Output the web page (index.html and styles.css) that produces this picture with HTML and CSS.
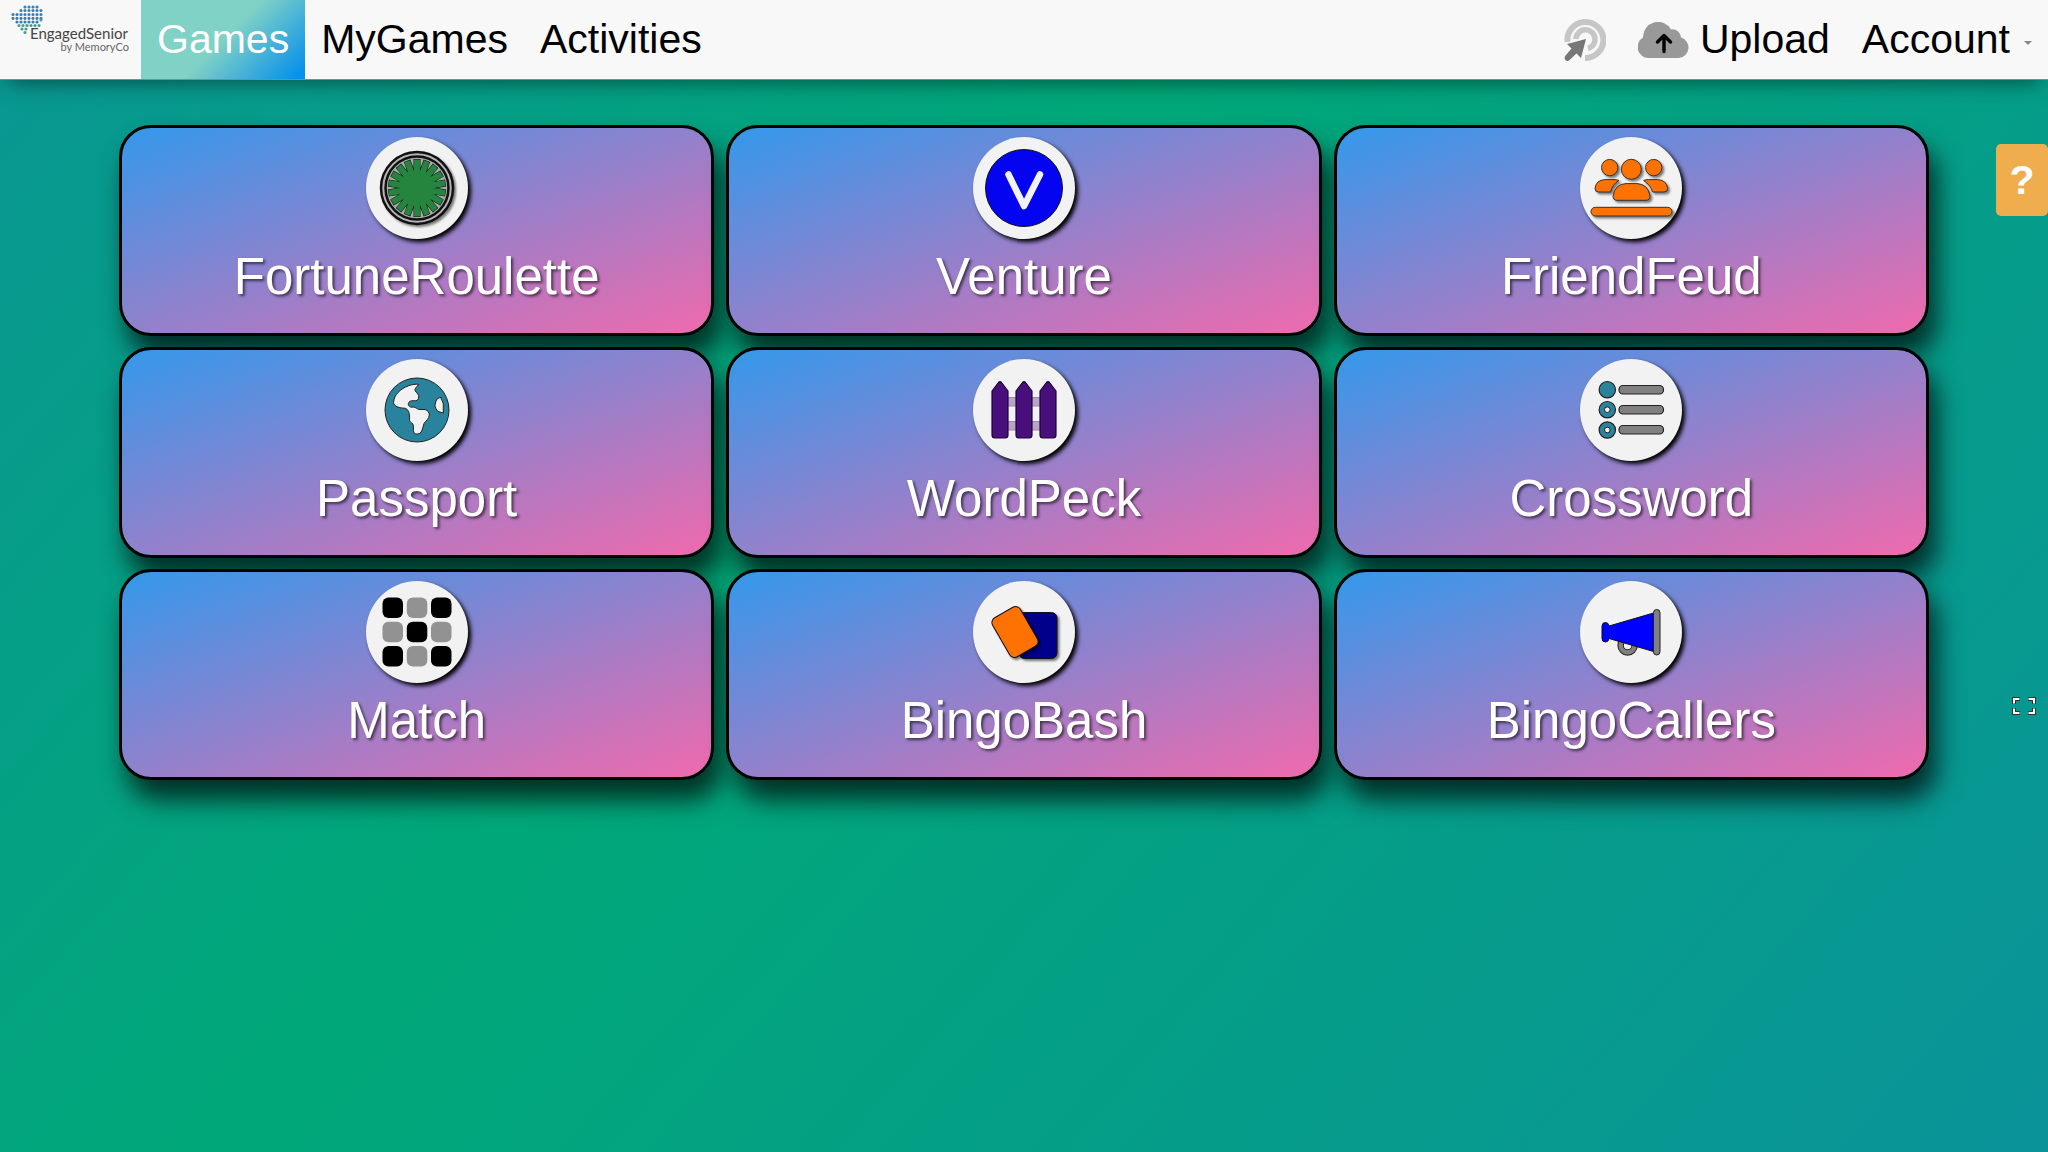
FILE: index.html
```
<!DOCTYPE html>
<html lang="en">
<head>
	<meta charset="utf-8">
	<title>EngagedSenior - Games</title>
	<link rel="stylesheet" href="styles.css">
</head>
<body>
	<header class="navbar">
		<a class="logo" href="#" aria-label="EngagedSenior by MemoryCo">
			<svg width="141" height="78" viewBox="0 0 141 78">
				<g fill="none" stroke-width="3.200" stroke-linecap="round" stroke-dasharray="0 4">
					<path stroke="#3d7fb5" d="M25 7h12.1M21 10.500h20.1M13 14.500h28.1"/>
					<path stroke="#3f7bab" d="M13 18.300h28.1M17 22h20.1"/>
					<path stroke="#45a08c" d="M19 25.500h20.100M41 20h.1M22 29h4.1M25 32.500h.1"/>
				</g>
				<text class="logo-name" x="30" y="39">EngagedSenior</text>
				<text class="logo-by" x="129" y="51" text-anchor="end">by MemoryCo</text>
			</svg>
		</a>
		<nav class="menu">
			<a class="menu-link active" href="#">Games</a>
			<a class="menu-link" href="#">MyGames</a>
			<a class="menu-link" href="#">Activities</a>
		</nav>
		<div class="menu menu-right">
			<a class="menu-link" href="#" aria-label="Click mode">
				<svg width="42" height="42" viewBox="0 0 42 42">
					<g fill="none" stroke="#c6c6c6" stroke-width="6">
						<path d="M3.500 23A18 18 0 1 1 21 39"/>
						<path d="M12 20A9.500 9.500 0 1 1 24 29.500" stroke-width="5.500"/>
					</g>
					<path fill="#777" d="M22 20 L17 39 L12.500 34.500 L5 41.500 Q2 43 .8 40 Q0 38 2 36 L7.500 29.500 L3 25 Z"/>
				</svg>
			</a>
			<a class="menu-link" href="#">
				<svg class="cloud" width="52" height="36" viewBox="0 0 52 36">
					<path fill="#999" d="M11 36A11 11 0 0 1 5 15.500 A15 15 0 0 1 33 7.500 A8.500 8.500 0 0 1 43 15.500 A10.500 10.500 0 0 1 41 36Z"/>
					<path fill="none" stroke="#000" stroke-width="3.400" stroke-linecap="round" stroke-linejoin="round" d="M26 29.500V14M19.500 20 26 13.500 32.500 20"/>
				</svg>
				Upload
			</a>
			<a class="menu-link" href="#">Account<span class="caret"></span></a>
		</div>
	</header>

	<main class="games">
		<a class="game" href="#">
			<svg class="icon" viewBox="0 0 102 102">
				<g class="shadow">
					<circle cx="51" cy="51" r="36" fill="#b5b5b5" stroke="#111" stroke-width="2.500"/>
					<circle cx="51" cy="51" r="31.500" fill="#aaa" stroke="#111" stroke-width="2.500"/>
				</g>
				<path class="tooth-edge" d="M51 22V80M60.900 23.700 41.100 78.300M69.600 28.800 32.400 73.200M76.100 36.500 25.900 65.500M79.600 46 22.400 56M79.600 56 22.400 46M76.100 65.500 25.900 36.500M69.600 73.200 32.400 28.800M60.900 78.300 41.100 23.700"/>
				<path class="tooth" d="M51 22.500V79.500M60.800 24.200 41.200 77.800M69.300 29.200 32.700 72.800M75.700 36.800 26.300 65.200M79.100 46 22.900 56M79.100 56 22.900 46M75.700 65.200 26.300 36.800M69.300 72.800 32.700 29.200M60.800 77.800 41.200 24.200"/>
			</svg>
			<span class="title">FortuneRoulette</span>
		</a>
		<a class="game" href="#">
			<svg class="icon" viewBox="0 0 102 102">
				<circle cx="51" cy="51" r="38.500" fill="#0404f0" stroke="#111" stroke-width="1"/>
				<path fill="none" stroke="#f2f2f2" stroke-width="6.500" stroke-linecap="round" stroke-linejoin="round" d="M35.500 37.500 51 69 67 37.500"/>
			</svg>
			<span class="title">Venture</span>
		</a>
		<a class="game" href="#">
			<svg class="icon" viewBox="0 0 102 102">
				<g class="shadow" fill="#fd7202" stroke="#333" stroke-width="1">
					<circle cx="29.700" cy="30.600" r="8.200"/>
					<circle cx="73.700" cy="30.600" r="8.200"/>
					<circle cx="51.300" cy="32.300" r="10"/>
					<path d="M25 42.600H34Q37 42.600 39 43.500Q32.500 47 30.500 55H18.500Q15 55 15 51.500Q16 43 25 42.600Z"/>
					<path d="M77.600 42.600H68.600Q65.600 42.600 63.600 43.500Q70.600 48 72.600 55H84Q87.600 55 87.600 51.500Q86.600 43 77.600 42.600Z"/>
					<path d="M46 46.600H57Q68 47 70 59Q70 63.300 66 63.300H37Q33 63.300 33 59Q35 47 46 46.600Z"/>
					<rect x="11" y="70.300" width="81" height="8.700" rx="4.300"/>
				</g>
			</svg>
			<span class="title">FriendFeud</span>
		</a>
		<a class="game" href="#">
			<svg class="icon" viewBox="0 0 102 102">
				<g stroke="#222" stroke-width="1" stroke-linejoin="round">
					<circle cx="51" cy="51" r="32" fill="#2a839d"/>
					<path fill="#f2f2f2" d="M27.600 43.300C28 36 34 30 42.600 26.700C46 25.500 50 25 52.600 25.300C51 28 48 29.500 49.300 32C51 34.500 54.500 36.500 51.600 41C49.500 43 47 40.500 43.500 42.500C41 45 42.500 48 46 48.300C49 47 50.500 50.500 54 50.500H59C62 51.500 63.300 53.500 63.300 56C63 60 60 61.500 58 64.500C57 68 56.500 70.500 55 73.300C53 75.500 49.500 75.500 48 74C46.500 71 48.500 66.500 46.500 64.500C43 62.500 43.500 61 43.600 58C43.500 54 42.500 50.500 39.300 49.300C36 49 34 49 31 47.700C29 46.500 27.500 45.500 27.600 43.300Z"/>
					<path fill="#f2f2f2" d="M71.500 39.500 75 38.300C74.500 40.500 77 42 77.300 45V54L72 52.500C70 50.500 69 48 69 46Q69.500 42 71.500 39.500Z"/>
				</g>
			</svg>
			<span class="title">Passport</span>
		</a>
		<a class="game" href="#">
			<svg class="icon" viewBox="0 0 102 102">
				<path fill="#b7a4c8" stroke="#9b8baa" stroke-width="1" d="M32 38.500H70V47H32ZM32 62.500H70V71H32Z"/>
				<g fill="#480f7d" stroke="#1c0633" stroke-width="1.200" stroke-linejoin="round">
					<path d="M19 32 25.500 23.500Q27 22 28.500 23.500L35 32V76Q35 79 32 79H22Q19 79 19 76Z"/>
					<path d="M43 32 49.500 23.500Q51 22 52.500 23.500L59 32V76Q59 79 56 79H46Q43 79 43 76Z"/>
					<path d="M67 32 73.500 23.500Q75 22 76.500 23.500L83 32V76Q83 79 80 79H70Q67 79 67 76Z"/>
				</g>
			</svg>
			<span class="title">WordPeck</span>
		</a>
		<a class="game" href="#">
			<svg class="icon" viewBox="0 0 102 102">
				<g stroke="#222" stroke-width="1.200" fill="#2a839d">
					<circle cx="27.300" cy="30.700" r="8.200"/>
					<circle cx="27.300" cy="50.700" r="8.200"/>
					<circle cx="27.300" cy="71" r="8.200"/>
				</g>
				<g stroke="#222" stroke-width="1" fill="#f2f2f2">
					<circle cx="27.300" cy="50.700" r="2.800"/>
					<circle cx="27.300" cy="71" r="2.800"/>
				</g>
				<g stroke="#222" stroke-width="1.200" fill="#808080">
					<rect x="39" y="26.500" width="44.500" height="8.500" rx="4"/>
					<rect x="39" y="46.500" width="44.500" height="8.500" rx="4"/>
					<rect x="39" y="66.500" width="44.500" height="8.500" rx="4"/>
				</g>
			</svg>
			<span class="title">Crossword</span>
		</a>
		<a class="game" href="#">
			<svg class="icon" viewBox="0 0 102 102">
				<g fill="#000">
					<rect x="16.500" y="16.500" width="20.500" height="20.500" rx="6"/>
					<rect x="65" y="16.500" width="20.500" height="20.500" rx="6"/>
					<rect x="40.800" y="40.800" width="20.500" height="20.500" rx="6"/>
					<rect x="16.500" y="65" width="20.500" height="20.500" rx="6"/>
					<rect x="65" y="65" width="20.500" height="20.500" rx="6"/>
				</g>
				<g fill="#929292">
					<rect x="40.800" y="16.500" width="20.500" height="20.500" rx="6"/>
					<rect x="16.500" y="40.800" width="20.500" height="20.500" rx="6"/>
					<rect x="65" y="40.800" width="20.500" height="20.500" rx="6"/>
					<rect x="40.800" y="65" width="20.500" height="20.500" rx="6"/>
				</g>
			</svg>
			<span class="title">Match</span>
		</a>
		<a class="game" href="#">
			<svg class="icon" viewBox="0 0 102 102">
				<g stroke="#111" stroke-width="1">
					<rect class="shadow" x="46" y="31.500" width="38" height="46" rx="5.500" fill="#00008b"/>
					<g class="shadow">
						<rect x="26" y="28.500" width="32" height="45" rx="5.500" fill="#fd7202" transform="rotate(-30 42 51)"/>
					</g>
				</g>
			</svg>
			<span class="title">BingoBash</span>
		</a>
		<a class="game" href="#">
			<svg class="icon" viewBox="0 0 102 102">
				<circle cx="47.600" cy="64.500" r="7" fill="none" stroke="#222" stroke-width="6.500"/>
				<circle cx="47.600" cy="64.500" r="7" fill="none" stroke="#808080" stroke-width="4.500"/>
				<path fill="#00f" stroke="#111" stroke-width="1" stroke-linejoin="round" d="M29 45 73.500 32V70.500L29 57.500Q28.500 61 25.500 61Q22 61 22 57.500V45Q22 41.500 25.500 41.500Q28.500 41.500 29 45Z"/>
				<rect x="73.500" y="28.500" width="6.500" height="45.500" rx="3.200" fill="#808080" stroke="#222" stroke-width="1"/>
			</svg>
			<span class="title">BingoCallers</span>
		</a>
	</main>

	<button class="help" type="button">?</button>
	<button class="fullscreen" type="button" aria-label="Full screen">
		<svg width="26" height="20" viewBox="0 0 26 20">
			<g fill="none">
				<path stroke="#333" stroke-width="4" d="M3 8V3H9M17 3H23V8M23 12V17H17M9 17H3V12"/>
				<path stroke="#fff" stroke-width="2" d="M3 7.500V3H8.500M17.500 3H23V7.500M23 12.500V17H17.500M8.500 17H3V12.500"/>
			</g>
		</svg>
	</button>
</body>
</html>
```
FILE: styles.css
```
* {
	box-sizing: border-box;
}
body {
	margin: 0;
	min-height: 100vh;
	font-family: "Liberation Sans", Arial, sans-serif;
	background: linear-gradient(131deg, #0a9694 0%, #00a878 40%, #0a9399 100%);
}
a {
	color: inherit;
	text-decoration: none;
}
button {
	border: none;
	cursor: pointer;
}

/* top bar */
.navbar {
	display: flex;
	height: 80px;
	background-color: #f8f8f8;
	border-bottom: 1px solid #888;
	box-shadow: 0 10px 20px -8px rgba(0, 0, 0, 0.5);
}
.logo,
.logo svg {
	display: block;
}
.logo-name {
	font: 15px Lato, sans-serif;
	fill: #444;
}
.logo-by {
	font: 11px Lato, sans-serif;
	fill: #666;
}
.menu {
	display: flex;
}
.menu-right {
	margin-left: auto;
}
.menu-link {
	display: flex;
	align-items: center;
	padding: 0 16px;
	font-size: 41px;
	color: #000;
}
.menu-link.active {
	color: #fff;
	background: linear-gradient(135deg, #80d1c6 50%, #0a92ea 95%);
}
.cloud {
	margin-right: 10px;
}
.caret {
	margin: 6px 0 0 14px;
	border-top: 4px solid #888;
	border-left: 4px solid transparent;
	border-right: 4px solid transparent;
}

/* game cards */
.games {
	display: grid;
	grid-template-columns: repeat(3, 1fr);
	gap: 11px 12px;
	padding: 45px 119px;
}
.game {
	display: flex;
	flex-direction: column;
	align-items: center;
	padding: 9px 9px 19px;
	border: 3px solid #000;
	border-radius: 32px;
	background: linear-gradient(to bottom right, #3498eb, #f06aad) padding-box;
	box-shadow: 8px 20px 26px rgba(0, 0, 0, 0.7);
}
.icon {
	width: 102px;
	height: 102px;
	border-radius: 50%;
	background-color: #f2f2f2;
	box-shadow: 3px 3px 4px #000;
}
.icon .shadow {
	filter: drop-shadow(2px 2px 1px rgba(0, 0, 0, 0.5));
}
.tooth {
	stroke: #25853f;
	stroke-width: 6;
}
.tooth-edge {
	stroke: #111;
	stroke-width: 7;
}
.title {
	font-size: 51px;
	line-height: 75px;
	color: #fff;
	text-shadow: 2px 2px 3px rgba(0, 0, 0, 0.6);
}

/* floating buttons */
.help {
	position: fixed;
	top: 144px;
	right: 0;
	width: 52px;
	height: 72px;
	padding: 0;
	border-radius: 5px;
	background-color: #f0ad4e;
	color: #fff;
	font: bold 41px "Liberation Sans", Arial, sans-serif;
}
.fullscreen {
	position: fixed;
	top: 696px;
	right: 11px;
	padding: 0;
	background: none;
}
.fullscreen svg {
	display: block;
}
```
